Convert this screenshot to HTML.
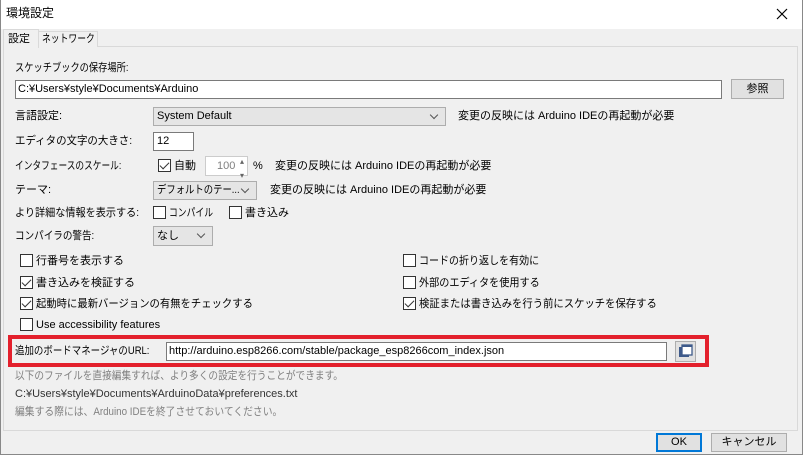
<!DOCTYPE html>
<html><head><meta charset="utf-8"><style>
*{box-sizing:border-box;margin:0;padding:0}
body{width:803px;height:455px;overflow:hidden;background:#f0f0f0;font-family:"Liberation Sans","Noto Sans CJK JP",sans-serif;font-size:11px;color:#000;position:relative}
.a{position:absolute;white-space:nowrap;line-height:14px;transform-origin:0 50%}
.box{position:absolute;background:#fff;border:1px solid #7a7a7a}
.cb{position:absolute;width:13px;height:13px;border:1px solid #333;background:#fff}
.cb.on::after{content:"";position:absolute;left:3px;top:0px;width:4px;height:8px;border:solid #333;border-width:0 1.5px 1.5px 0;transform:rotate(45deg)}
.sel{position:absolute;background:#e5e5e5;border:1px solid #adadad}
.sel::after{content:"";position:absolute;right:8px;top:4px;width:5px;height:5px;border:solid #555;border-width:0 1px 1px 0;transform:rotate(45deg)}
.btn{position:absolute;background:#e1e1e1;border:1px solid #adadad;text-align:center;line-height:18px}
.g{color:#808080}
</style></head><body>
<div style="position:absolute;left:0;top:0;width:803px;height:29px;background:#fff"></div>
<div style="position:absolute;left:0;top:0;width:1px;height:455px;background:#888"></div>
<div style="position:absolute;right:0;top:0;width:1px;height:455px;background:#888"></div>
<div style="position:absolute;left:0;bottom:0;width:803px;height:1px;background:#888"></div>
<div class="a" style="left:6px;top:6px;font-size:12px">環境設定</div>
<svg style="position:absolute;left:776px;top:8px" width="12" height="12"><path d="M1 1L11 11M11 1L1 11" stroke="#000" stroke-width="1.2"/></svg>
<div style="position:absolute;left:3px;top:46px;width:795px;height:385px;border:1px solid #d9d9d9;background:#f0f0f0"></div>
<div style="position:absolute;left:38px;top:31px;width:60px;height:16px;border:1px solid #d9d9d9;border-bottom:none;background:#f0f0f0"></div>
<div style="position:absolute;left:3px;top:29px;width:36px;height:19px;border:1px solid #d9d9d9;border-bottom:none;background:#f0f0f0"></div>
<div class="a" style="left:8px;top:32px">設定</div>
<div class="a" style="left:42px;top:32px;transform:scaleX(0.8)">ネットワーク</div>

<div class="a" style="left:15px;top:61px;transform:scaleX(0.84)">スケッチブックの保存場所:</div>
<div class="box" style="left:15px;top:80px;width:707px;height:19px"></div>
<div class="a" style="left:18px;top:82px">C:¥Users¥style¥Documents¥Arduino</div>
<div class="btn" style="left:731px;top:79px;width:53px;height:20px">参照</div>

<div class="a" style="left:15px;top:109px">言語設定:</div>
<div class="sel" style="left:153px;top:107px;width:293px;height:19px"></div>
<div class="a" style="left:157px;top:109px">System Default</div>
<div class="a" style="left:458px;top:109px">変更の反映には Arduino IDEの再起動が必要</div>

<div class="a" style="left:15px;top:134px;transform:scaleX(0.95)">エディタの文字の大きさ:</div>
<div class="box" style="left:153px;top:132px;width:41px;height:19px"></div>
<div class="a" style="left:157px;top:134px">12</div>

<div class="a" style="left:15px;top:159px;transform:scaleX(0.79)">インタフェースのスケール:</div>
<div class="cb on" style="left:158px;top:159px"></div>
<div class="a" style="left:174px;top:159px">自動</div>
<div class="box" style="left:205px;top:156px;width:43px;height:20px;border-color:#ccc"></div>
<div class="a g" style="left:217px;top:159px">100</div>
<div class="a" style="left:240px;top:155px;font-size:8px;color:#666">▴<br>▾</div>
<div class="a" style="left:253px;top:159px">%</div>
<div class="a" style="left:275px;top:159px">変更の反映には Arduino IDEの再起動が必要</div>

<div class="a" style="left:15px;top:183px">テーマ:</div>
<div class="sel" style="left:153px;top:181px;width:104px;height:19px"></div>
<div class="a" style="left:157px;top:183px;transform:scaleX(0.85)">デフォルトのテー...</div>
<div class="a" style="left:270px;top:183px">変更の反映には Arduino IDEの再起動が必要</div>

<div class="a" style="left:15px;top:206px;transform:scaleX(0.92)">より詳細な情報を表示する:</div>
<div class="cb" style="left:153px;top:206px"></div>
<div class="a" style="left:169px;top:206px;transform:scaleX(0.8)">コンパイル</div>
<div class="cb" style="left:229px;top:206px"></div>
<div class="a" style="left:245px;top:206px">書き込み</div>

<div class="a" style="left:15px;top:229px;transform:scaleX(0.87)">コンパイラの警告:</div>
<div class="sel" style="left:153px;top:226px;width:60px;height:20px"></div>
<div class="a" style="left:157px;top:229px">なし</div>

<div class="cb" style="left:20px;top:254px"></div><div class="a" style="left:36px;top:254px">行番号を表示する</div>
<div class="cb on" style="left:20px;top:276px"></div><div class="a" style="left:36px;top:276px">書き込みを検証する</div>
<div class="cb on" style="left:20px;top:297px"></div><div class="a" style="left:36px;top:297px;transform:scaleX(0.94)">起動時に最新バージョンの有無をチェックする</div>
<div class="cb" style="left:20px;top:318px"></div><div class="a" style="left:36px;top:318px">Use accessibility features</div>
<div class="cb" style="left:403px;top:254px"></div><div class="a" style="left:419px;top:254px;transform:scaleX(0.91)">コードの折り返しを有効に</div>
<div class="cb" style="left:403px;top:276px"></div><div class="a" style="left:419px;top:276px;transform:scaleX(0.92)">外部のエディタを使用する</div>
<div class="cb on" style="left:403px;top:297px"></div><div class="a" style="left:419px;top:297px;transform:scaleX(0.94)">検証または書き込みを行う前にスケッチを保存する</div>

<div style="position:absolute;left:8px;top:335px;width:701px;height:32px;border:4px solid #e3202c"></div>
<div class="a" style="left:15px;top:344px;transform:scaleX(0.86)">追加のボードマネージャのURL:</div>
<div class="box" style="left:166px;top:342px;width:501px;height:19px"></div>
<div class="a" style="left:169px;top:344px">http://arduino.esp8266.com/stable/package_esp8266com_index.json</div>
<div class="btn" style="left:675px;top:341px;width:21px;height:21px"></div>
<svg style="position:absolute;left:677px;top:343px" width="17" height="17"><rect x="2" y="4" width="10" height="10" fill="#3e5a8a"/><rect x="5" y="2" width="10" height="10" fill="#fff" stroke="#3e5a8a" stroke-width="1.3"/><rect x="5" y="2" width="10" height="2" fill="#3e5a8a"/></svg>

<div class="a g" style="left:15px;top:369px;transform:scaleX(0.88)">以下のファイルを直接編集すれば、より多くの設定を行うことができます。</div>
<div class="a" style="left:15px;top:387px;color:#333">C:¥Users¥style¥Documents¥ArduinoData¥preferences.txt</div>
<div class="a g" style="left:15px;top:405px;transform:scaleX(0.89)">編集する際には、Arduino IDEを終了させておいてください。</div>

<div class="btn" style="left:656px;top:433px;width:46px;height:19px;border:2px solid #0078d7;line-height:15px">OK</div>
<div class="btn" style="left:711px;top:433px;width:76px;height:19px;line-height:17px">キャンセル</div>
</body></html>
